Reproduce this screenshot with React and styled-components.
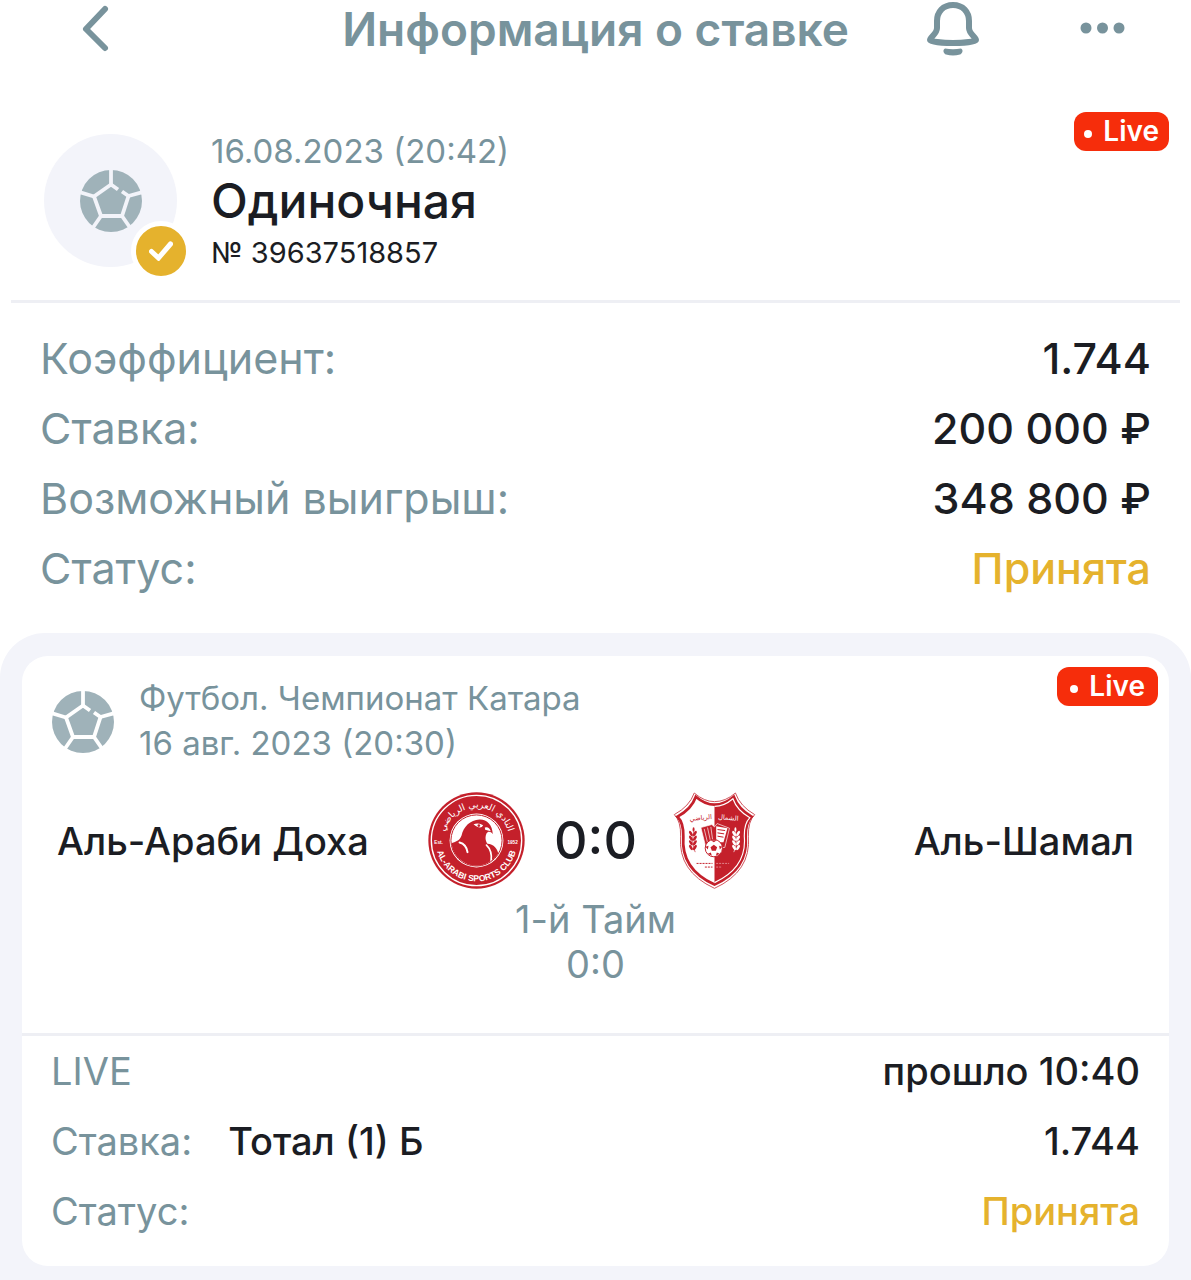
import React from 'react';
import styled, { createGlobalStyle } from 'styled-components';

const GlobalStyle = createGlobalStyle`
  * {
    box-sizing: border-box;
  }

  body {
    margin: 0;
    background: #fff;
    color: #1b1d23;
    font-family: Inter, 'Liberation Sans', sans-serif;
  }

  h1, h2, p, dl, dt, dd {
    margin: 0;
    font-weight: 400;
  }

  svg {
    display: block;
  }
`;

const Page = styled.main`
  display: flex;
  flex-direction: column;
  min-height: 100vh;
`;

const Header = styled.header`
  display: grid;
  grid-template-columns: 1fr auto 1fr;
  align-items: center;
  height: 58px;
  padding: 0 64px;
`;

const Title = styled.h1`
  color: #78939c;
  font-size: 46px;
  font-weight: 600;
  line-height: 58px;
  white-space: nowrap;
`;

const Actions = styled.div`
  display: flex;
  justify-content: flex-end;
  align-items: center;
  gap: 100px;
`;

const IconButton = styled.button`
  justify-self: start;
  padding: 0;
  border: none;
  background: none;
  color: #78939c;
  cursor: pointer;
`;

const BackButton = styled(IconButton)`
  padding-left: 16px;
`;

const Summary = styled.section`
  display: flex;
  align-items: flex-start;
  gap: 34px;
  margin: 54px 11px 0;
  padding: 0 11px 22px 33px;
  border-bottom: 3px solid #eeeff4;
`;

const Avatar = styled.div`
  position: relative;
  display: flex;
  justify-content: center;
  align-items: center;
  width: 133px;
  height: 133px;
  margin-top: 22px;
  border-radius: 50%;
  background: #f3f4fa;
`;

const Check = styled.span`
  position: absolute;
  right: -14px;
  bottom: -14px;
  display: flex;
  justify-content: center;
  align-items: center;
  width: 60px;
  height: 60px;
  border: 5px solid #fff;
  border-radius: 50%;
  background: #e5b22d;
`;

const SummaryText = styled.div`
  flex: 1;
  padding-top: 17px;
`;

const Muted = styled.p`
  color: #78939c;
  font-size: ${(props) => props.$size || 33}px;
  line-height: 45px;
`;

const BetType = styled.h2`
  font-size: 48px;
  font-weight: 500;
  line-height: 54px;
`;

const BetNumber = styled.p`
  font-size: 29px;
  line-height: 50px;
`;

const LiveBadge = styled.span`
  display: flex;
  align-items: center;
  gap: 11px;
  padding: 0 ${(props) => (props.$wide ? 13 : 10)}px;
  border-radius: 12px;
  background: #f62d0b;
  color: #fff;
  font-size: 28px;
  font-weight: 600;
  line-height: 39px;

  &::before {
    content: '';
    width: 8px;
    height: 8px;
    margin-top: 4px;
    border-radius: 50%;
    background: #fff;
  }
`;

const List = styled.dl`
  padding: ${(props) => (props.$small ? '0 29px 20px' : '20px 40px 30px')};
  font-size: ${(props) => (props.$small ? 38 : 43)}px;
  line-height: 70px;
`;

const Row = styled.div`
  display: flex;
  gap: 36px;
`;

const Label = styled.dt`
  color: #78939c;
`;

const Value = styled.dd`
  color: ${(props) => (props.$accent ? '#e5b22d' : 'inherit')};
  font-weight: 500;

  &:last-child {
    margin-left: auto;
  }
`;

const Events = styled.section`
  flex: 1;
  padding: 23px 22px 14px;
  border-radius: 45px 45px 0 0;
  background: #f3f4fa;
`;

const Card = styled.article`
  border-radius: 26px;
  background: #fff;
`;

const CardHeader = styled.div`
  display: flex;
  align-items: flex-start;
  padding: 11px 11px 0 30px;
`;

const BallSlot = styled.div`
  padding: 24px 25px 0 0;
`;

const League = styled.div`
  flex: 1;
  padding-top: 9px;
`;

const Match = styled.div`
  display: grid;
  grid-template-columns: 1fr auto 1fr;
  align-items: center;
  padding: 26px 35px 0;
`;

const Team = styled.p`
  font-size: 38px;
  font-weight: 500;
  line-height: 46px;
  text-align: ${(props) => (props.$away ? 'right' : 'left')};
`;

const Versus = styled.div`
  display: flex;
  align-items: center;
  gap: 29px;
`;

const Score = styled.strong`
  font-size: 52px;
  font-weight: 500;
  line-height: 56px;
`;

const Period = styled.div`
  padding: 8px 0 46px;
  border-bottom: 3px solid #eeeff4;
  text-align: center;
`;

function Ball() {
  return (
    <svg width="62" height="62" viewBox="0 0 62 62" aria-hidden="true">
      <defs>
        <mask id="seams">
          <rect width="62" height="62" fill="#fff" />
          <g fill="none" stroke="#000" strokeWidth="3.8">
            <path d="M31 -1V15" />
            <path d="M38 19.5L31 14.500L14 26.500L21 46H42L48.500 26L42 21.500" />
            <path d="M14 26.500L-1 22M48.500 26L63 22M21 46L12 59M42 46L51 59" />
          </g>
        </mask>
      </defs>
      <circle cx="31" cy="31" r="31" fill="#9fb2b9" mask="url(#seams)" />
    </svg>
  );
}

function Bell() {
  return (
    <svg width="52" height="56" viewBox="0 0 52 56" fill="none" stroke="currentColor" aria-hidden="true">
      <path
        d="M26 4C16 4 10 11 10 20V27C10 33 3 36 3 39C3 40.500 15 42 26 42S49 40.500 49 39C49 36 42 33 42 27V20C42 11 36 4 26 4Z"
        strokeWidth="6"
        strokeLinejoin="round"
      />
      <path d="M18 47.500Q26 49 34 47.500C37 49 35 53 33 53.500Q26 55.500 19 53.500C17 53 15 49 18 47.500Z" fill="currentColor" stroke="none" />
    </svg>
  );
}

function ArabiCrest() {
  return (
    <svg width="97" height="97" viewBox="27 37 292 292" role="img" aria-label="Аль-Араби Доха">
      <defs>
        <path id="arabiTop" d="M74 183A99 99 0 0 1 272 183" />
        <path id="arabiBottom" d="M50 183A123 123 0 0 0 296 183" />
        <clipPath id="arabiInner">
          <circle cx="173" cy="183" r="76" />
        </clipPath>
      </defs>
      <circle cx="173" cy="183" r="145" fill="#c4202b" />
      <circle cx="173" cy="183" r="136" fill="none" stroke="#fff" strokeWidth="4" />
      <circle cx="173" cy="183" r="81" fill="#fff" />
      <g clipPath="url(#arabiInner)">
        <path
          fill="#c4202b"
          d="M92 194C108 186 122 186 128 168C134 142 154 121 182 120C204 119 221 136 222 164C216 156 208 154 203 162C198 174 200 184 206 193C224 194 238 208 240 230L230 270H90Z"
        />
        <path d="M122 189Q142 194 146 218" fill="none" stroke="#fff" strokeWidth="6" strokeLinecap="round" />
        <path d="M203 197Q221 214 217 244" fill="none" stroke="#fff" strokeWidth="5" strokeLinecap="round" />
        <path d="M164 134Q180 128 193 137Q186 152 164 134ZM198 144Q210 139 216 155L199 151Z" fill="#fff" />
        <circle cx="180" cy="138" r="4" fill="#c4202b" />
      </g>
      <circle cx="173" cy="183" r="77" fill="none" stroke="#c4202b" strokeWidth="3" />
      <g fill="#fff" fontFamily="'Liberation Sans', sans-serif" fontWeight="700">
        <text fontSize="26">
          <textPath href="#arabiBottom" startOffset="50%" textAnchor="middle">
            AL-ARABI SPORTS CLUB
          </textPath>
        </text>
        <text x="46" y="193" fontSize="14">Est.</text>
        <text x="266" y="193" fontSize="14">1952</text>
        <text fontSize="28" fontWeight="400" fontFamily="'DejaVu Sans', sans-serif">
          <textPath href="#arabiTop" startOffset="50%" textAnchor="middle">
            النادي العربي الرياضي
          </textPath>
        </text>
      </g>
    </svg>
  );
}

const shield =
  'M102 40Q132 66 163 66Q196 66 226 40Q240 80 284 105Q264 125 265 170Q274 276 163 327Q52 276 61 170Q62 125 42 105Q88 80 102 40Z';

function Laurel() {
  return (
    <g>
      <path d="M105 218Q92 190 101 156" fill="none" stroke="currentColor" strokeWidth="2" />
      {[162, 176, 190, 204].map((y) => (
        <g key={y} fill="currentColor">
          <ellipse cx="92" cy={y} rx="4" ry="9" transform={`rotate(-32 92 ${y})`} />
          <ellipse cx="104" cy={y} rx="4" ry="9" transform={`rotate(32 104 ${y})`} />
        </g>
      ))}
      <ellipse cx="100" cy="150" rx="3" ry="7" fill="currentColor" />
    </g>
  );
}

function ShamalCrest() {
  return (
    <svg width="97" height="97" viewBox="17 37 292 292" role="img" aria-label="Аль-Шамал">
      <defs>
        <clipPath id="rightHalf">
          <rect x="163" y="30" width="150" height="310" />
        </clipPath>
      </defs>
      <path d={shield} fill="#fff" stroke="#d0535c" strokeWidth="3" />
      <g transform="translate(163 183) scale(.92) translate(-163 -183)">
        <path d={shield} fill="#fff" stroke="#c4202b" strokeWidth="9" />
        <path d={shield} fill="#c4202b" clipPath="url(#rightHalf)" />
      </g>
      <g transform="translate(163 183) scale(.88) translate(-163 -183)">
        <path d={shield} fill="none" stroke="#fff" strokeWidth="4" clipPath="url(#rightHalf)" />
      </g>
      <g color="#c4202b">
        <Laurel />
      </g>
      <g color="#fff" transform="translate(326 0) scale(-1 1)">
        <Laurel />
      </g>
      <path d="M122 144L155 135L163 142L171 132L208 146L194 204H137Z" fill="#c4202b" stroke="#fff" strokeWidth="2" />
      <path d="M168 140L202 146L190 188H168Z" fill="#fff" />
      <path d="M132 148L144 198M142 144L152 190M152 142L158 186" stroke="#fff" strokeWidth="2" />
      <path d="M172 150L195 153M172 160L192 163M172 170L190 173" stroke="#c4202b" strokeWidth="3" />
      <circle cx="161" cy="206" r="26" fill="#fff" stroke="#c4202b" strokeWidth="3" />
      <path
        d="M161 196L171 203L167 214H155L151 203ZM152 182H170L161 188ZM136 202L145 199L143 210ZM186 202L177 199L179 210ZM143 223L152 219L155 229ZM179 223L170 219L167 229Z"
        fill="#c4202b"
      />
      <g fontFamily="'DejaVu Sans', sans-serif" fontSize="20">
        <text x="122" y="121" textAnchor="middle" fill="#c4202b" transform="rotate(-5 122 121)">الرياضي</text>
        <text x="204" y="121" textAnchor="middle" fill="#fff" transform="rotate(5 204 121)">الشمال</text>
      </g>
      <path d="M109 252H157M134 263H157" stroke="#c4202b" strokeWidth="3" strokeDasharray="6 3" />
      <path d="M168 252H207M168 263H184" stroke="#f0b5b9" strokeWidth="2" strokeDasharray="6 3" />
    </svg>
  );
}

const stats = [
  { label: 'Коэффициент:', value: '1.744' },
  { label: 'Ставка:', value: '200 000 ₽' },
  { label: 'Возможный выигрыш:', value: '348 800 ₽' },
  { label: 'Статус:', value: 'Принята', accent: true },
];

export default function App() {
  return (
    <>
      <GlobalStyle />
      <Page>
        <Header>
          <BackButton aria-label="Назад">
            <svg width="32" height="50" viewBox="0 0 32 50" fill="none" stroke="currentColor" aria-hidden="true">
              <path d="M25 5L6 25L25 44" strokeWidth="6" strokeLinecap="round" strokeLinejoin="round" />
            </svg>
          </BackButton>
          <Title>Информация о ставке</Title>
          <Actions>
            <IconButton aria-label="Уведомления">
              <Bell />
            </IconButton>
            <IconButton aria-label="Ещё">
              <svg width="48" height="14" viewBox="0 0 48 14" fill="currentColor" aria-hidden="true">
                <circle cx="7" cy="6" r="5.500" />
                <circle cx="23.500" cy="6" r="5.500" />
                <circle cx="40" cy="6" r="5.500" />
              </svg>
            </IconButton>
          </Actions>
        </Header>

        <Summary>
          <Avatar>
            <Ball />
            <Check>
              <svg width="24" height="20" viewBox="0 0 24 20" fill="none" stroke="#fff" aria-hidden="true">
                <path d="M2.500 10.500L9.500 17L21.500 3" strokeWidth="5" strokeLinecap="round" />
              </svg>
            </Check>
          </Avatar>
          <SummaryText>
            <Muted>16.08.2023 (20:42)</Muted>
            <BetType>Одиночная</BetType>
            <BetNumber>№ 39637518857</BetNumber>
          </SummaryText>
          <LiveBadge>Live</LiveBadge>
        </Summary>

        <List>
          {stats.map((item) => (
            <Row key={item.label}>
              <Label>{item.label}</Label>
              <Value $accent={item.accent}>{item.value}</Value>
            </Row>
          ))}
        </List>

        <Events>
          <Card>
            <CardHeader>
              <BallSlot>
                <Ball />
              </BallSlot>
              <League>
                <Muted>Футбол. Чемпионат Катара</Muted>
                <Muted>16 авг. 2023 (20:30)</Muted>
              </League>
              <LiveBadge $wide>Live</LiveBadge>
            </CardHeader>
            <Match>
              <Team>Аль-Араби Доха</Team>
              <Versus>
                <ArabiCrest />
                <Score>0:0</Score>
                <ShamalCrest />
              </Versus>
              <Team $away>Аль-Шамал</Team>
            </Match>
            <Period>
              <Muted $size={38}>1-й Тайм</Muted>
              <Muted $size={38}>0:0</Muted>
            </Period>
            <List $small>
              <Row>
                <Label>LIVE</Label>
                <Value>прошло 10:40</Value>
              </Row>
              <Row>
                <Label>Ставка:</Label>
                <Value>Тотал (1) Б</Value>
                <Value>1.744</Value>
              </Row>
              <Row>
                <Label>Статус:</Label>
                <Value $accent>Принята</Value>
              </Row>
            </List>
          </Card>
        </Events>
      </Page>
    </>
  );
}
